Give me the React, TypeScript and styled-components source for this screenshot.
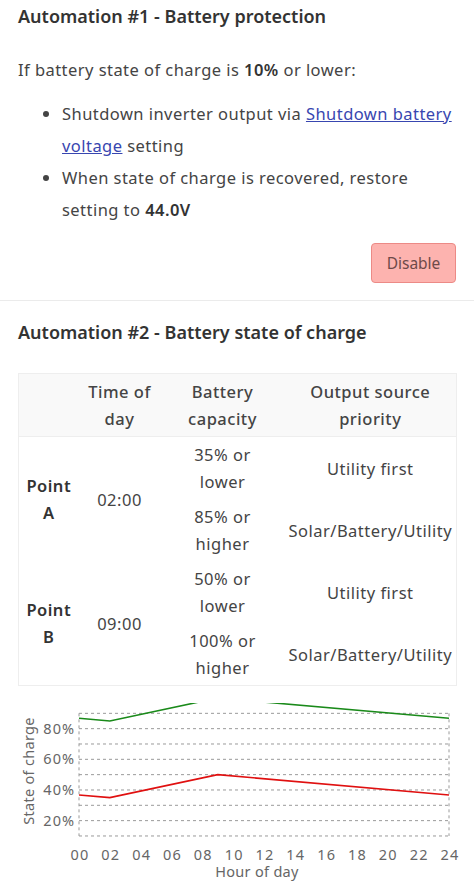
import React from "react";
import styled, { createGlobalStyle } from "styled-components";

const Global = createGlobalStyle`
  html, body { margin: 0; padding: 0; background: #fff; }
  body { font-family: "Noto Sans", "Open Sans", sans-serif; color: #444; overflow: hidden; }
`;

const Page = styled.div`
  width: 474px;
`;

const Section = styled.section`
  padding: 0 18px;
`;

const Title = styled.h2`
  margin: 0;
  font-size: 18px;
  line-height: 32px;
  font-weight: 600;
  color: #333;
`;

const Para = styled.p`
  margin: 22px 0 0;
  font-size: 16.5px;
  line-height: 32px;
  letter-spacing: 0.45px;
`;

const Strong = styled.b`
  font-weight: 600;
  color: #333;
`;

const List = styled.ul`
  margin: 12px 0 0;
  padding-left: 44px;
  font-size: 16.5px;
  line-height: 32px;
  letter-spacing: 0.45px;
`;

const Link = styled.a`
  color: #3846b0;
  text-decoration: underline;
`;

const ButtonRow = styled.div`
  display: flex;
  justify-content: flex-end;
  margin-top: 17px;
`;

const DangerButton = styled.button`
  height: 40px;
  width: 85px;
  border: 1px solid #ec8a86;
  background: #fdb3af;
  border-radius: 4px;
  color: #6e4a49;
  font-family: inherit;
  font-size: 15.5px;
  padding: 0;
`;

const Divider = styled.hr`
  border: 0;
  border-top: 1px solid #ebebeb;
  margin: 17px 0 15px;
`;

const Table = styled.table`
  margin-top: 25px;
  width: 438px;
  border-collapse: collapse;
  border: 1px solid #eeeeee;
  table-layout: fixed;
  font-size: 16.5px;
  line-height: 27px;
  letter-spacing: 0.5px;
`;

const HeadCell = styled.th`
  background: #f9f9f9;
  font-weight: 500;
  color: #444;
  padding: 4px 0;
  height: 54px;
  border-bottom: 1px solid #eeeeee;
  text-align: center;
`;

const Cell = styled.td<{ $bold?: boolean }>`
  text-align: center;
  padding: 4px 0;
  height: 54px;
  font-weight: ${(p) => (p.$bold ? 600 : 400)};
  color: ${(p) => (p.$bold ? "#333" : "#444")};
`;

const ChartWrap = styled.div`
  margin-top: 2px;
  svg { overflow: visible; display: block; }
`;

const W = 438;
const PL = 61;
const PR = 431;
const xOf = (h: number) => PL + ((PR - PL) * h) / 24;
const yOf = (v: number) => 10 + (100 - v) * 1.533;

const Chart: React.FC = () => {
  const grid = [90, 80, 70, 60, 50, 40, 30, 20, 10];
  const ticks = [0, 2, 4, 6, 8, 10, 12, 14, 16, 18, 20, 22, 24];
  const green: [number, number][] = [[0, 86.76], [2, 85], [9, 100], [24, 86.76]];
  const red: [number, number][] = [[0, 36.76], [2, 35], [9, 50], [24, 36.76]];
  const pts = (a: [number, number][]) => a.map(([h, v]) => `${xOf(h)},${yOf(v)}`).join(" ");
  const font = { fontSize: 14.5, fill: "#666", fontFamily: "Noto Sans, sans-serif" };
  return (
    <svg width={W} height={200} viewBox={`0 0 ${W} 200`}>
      <defs>
        <clipPath id="plot">
          <rect x={PL} y={15} width={PR - PL} height={140} />
        </clipPath>
      </defs>
      {grid.map((g) => (
        <line key={g} x1={PL} x2={PR} y1={yOf(g)} y2={yOf(g)} stroke="#9a9a9a" strokeDasharray="3 3" strokeWidth={1} />
      ))}
      <line x1={PL} x2={PL} y1={yOf(90)} y2={yOf(10)} stroke="#9a9a9a" strokeDasharray="3 3" />
      <line x1={PR} x2={PR} y1={yOf(90)} y2={yOf(10)} stroke="#9a9a9a" strokeDasharray="3 3" />
      {[80, 60, 40, 20].map((v) => (
        <text key={v} x={PL - 4} y={yOf(v) + 5} {...font} letterSpacing={1} textAnchor="end">
          {v}%
        </text>
      ))}
      {ticks.map((t) => (
        <text key={t} x={xOf(t) + 1} y={172} {...font} letterSpacing={1.2} textAnchor="middle">
          {String(t).padStart(2, "0")}
        </text>
      ))}
      <text x={(PL + PR) / 2 - 7} y={189} {...font} letterSpacing={0.3} textAnchor="middle">
        Hour of day
      </text>
      <text x={0} y={0} transform={`translate(16 83) rotate(-90)`} {...font} letterSpacing={0.3} textAnchor="middle">
        State of charge
      </text>
      <g clipPath="url(#plot)" fill="none" strokeWidth={1.6}>
        <polyline points={pts(green)} stroke="#1a8a1a" />
        <polyline points={pts(red)} stroke="#e01010" />
      </g>
    </svg>
  );
};

export default function App() {
  return (
    <Page>
      <Global />
      <Section>
        <Title>Automation #1 - Battery protection</Title>
        <Para>
          If battery state of charge is <Strong>10%</Strong> or lower:
        </Para>
        <List>
          <li>
            Shutdown inverter output via <Link href="#">Shutdown battery voltage</Link> setting
          </li>
          <li>
            When state of charge is recovered, restore setting to <Strong>44.0V</Strong>
          </li>
        </List>
        <ButtonRow>
          <DangerButton>Disable</DangerButton>
        </ButtonRow>
      </Section>
      <Divider />
      <Section>
        <Title>Automation #2 - Battery state of charge</Title>
        <Table>
          <colgroup>
            <col style={{ width: 60 }} />
            <col style={{ width: 82 }} />
            <col style={{ width: 124 }} />
            <col style={{ width: 172 }} />
          </colgroup>
          <thead>
            <tr>
              <HeadCell />
              <HeadCell>
                Time of
                <br />
                day
              </HeadCell>
              <HeadCell>
                Battery
                <br />
                capacity
              </HeadCell>
              <HeadCell>
                Output source
                <br />
                priority
              </HeadCell>
            </tr>
          </thead>
          <tbody>
            <tr>
              <Cell $bold rowSpan={2}>
                Point
                <br />A
              </Cell>
              <Cell rowSpan={2}>02:00</Cell>
              <Cell>
                35% or
                <br />
                lower
              </Cell>
              <Cell>Utility first</Cell>
            </tr>
            <tr>
              <Cell>
                85% or
                <br />
                higher
              </Cell>
              <Cell>Solar/Battery/Utility</Cell>
            </tr>
            <tr>
              <Cell $bold rowSpan={2}>
                Point
                <br />B
              </Cell>
              <Cell rowSpan={2}>09:00</Cell>
              <Cell>
                50% or
                <br />
                lower
              </Cell>
              <Cell>Utility first</Cell>
            </tr>
            <tr>
              <Cell>
                100% or
                <br />
                higher
              </Cell>
              <Cell>Solar/Battery/Utility</Cell>
            </tr>
          </tbody>
        </Table>
        <ChartWrap>
          <Chart />
        </ChartWrap>
      </Section>
    </Page>
  );
}
